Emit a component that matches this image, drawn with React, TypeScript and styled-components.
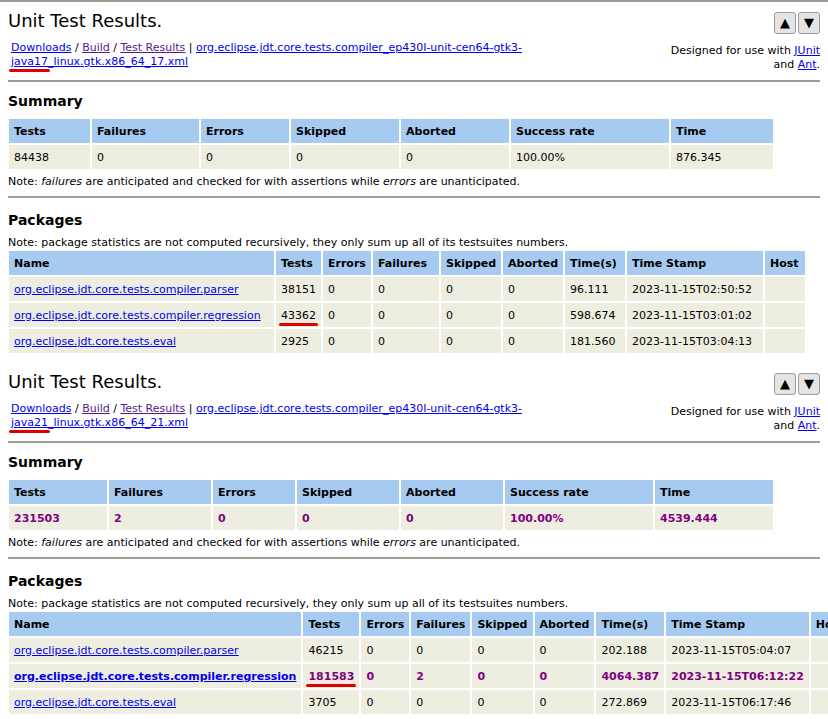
import React from "react";
import styled, { createGlobalStyle, css } from "styled-components";

const GlobalStyles = createGlobalStyle`
  html, body { margin: 0; background: #fff; overflow: hidden; }
  body {
    font-family: "DejaVu Sans", Verdana, sans-serif;
    font-size: 11px;
    color: #000;
    border-top: 2px solid #a09c94;
    padding: 0 8px;
  }
  a { color: #0000ee; }
`;

const Wrap = styled.div<{ $first?: boolean }>`
  margin-top: ${(p) => (p.$first ? 0 : 8)}px;
`;

const Header = styled.div`
  display: flex;
  justify-content: space-between;
  align-items: flex-start;
  padding-top: 8px;
`;

const Title = styled.h1`
  margin: 0 0 10px 0;
  font-size: 18px;
  font-weight: normal;
`;

const Crumbs = styled.div`
  line-height: 14px;
  padding-left: 3px;
`;

const Visited = styled.a`
  color: #551a8b;
`;

const RightBox = styled.div`
  display: flex;
  flex-direction: column;
  align-items: flex-end;
  text-align: right;
  line-height: 14px;
  gap: 10px;
  padding-top: 2px;
`;

const Arrows = styled.div`
  display: flex;
  gap: 2px;
`;

const ArrowBtn = styled.button`
  width: 22px;
  height: 22px;
  padding: 0;
  border: 1px solid #9a9a9a;
  border-radius: 3px;
  background: #e4e4e4;
  font-size: 13px;
  line-height: 20px;
  font-family: "DejaVu Sans", sans-serif;
`;

const Mark = styled.span`
  position: relative;
  &::after {
    content: "";
    position: absolute;
    left: -2px;
    right: -2px;
    bottom: -4px;
    height: 3px;
    border-radius: 2px;
    background: #e00000;
  }
`;

const Rule = styled.hr`
  border: 0;
  border-top: 2px solid #a09c94;
  margin: 8px 0 0 0;
`;

const H2 = styled.h2<{ $pk?: boolean }>`
  font-size: 14px;
  margin: ${(p) => (p.$pk ? "14px 0 8px 0" : "11px 0 8px 0")};
`;

const Table = styled.table`
  border-collapse: separate;
  border-spacing: 2px;
  table-layout: fixed;
  margin-left: -1px;
`;

const Th = styled.th`
  background: #a6caf0;
  text-align: left;
  padding: 0 5px;
  height: 24px;
  font-weight: bold;
  white-space: nowrap;
  overflow: hidden;
`;

const Td = styled.td<{ $hl?: boolean }>`
  background: #eeeee0;
  padding: 0 5px;
  height: 24px;
  white-space: nowrap;
  overflow: hidden;
  ${(p) =>
    p.$hl &&
    css`
      color: #800080;
      font-weight: bold;
    `}
`;

const Note = styled.p`
  margin: 4px 0 6px 0;
`;

type Pkg = { name: string; v: string[]; hl?: boolean; mark?: boolean };

type Section = {
  file: string;
  mark: string;
  summary: string[];
  hl: boolean;
  sumW: number[];
  pkgW: number[];
  pkgs: Pkg[];
};

const sumHead = ["Tests", "Failures", "Errors", "Skipped", "Aborted", "Success rate", "Time"];
const pkgHead = ["Name", "Tests", "Errors", "Failures", "Skipped", "Aborted", "Time(s)", "Time Stamp", "Host"];

const sections: Section[] = [
  {
    file: "_linux.gtk.x86_64_17.xml",
    mark: "java17",
    summary: ["84438", "0", "0", "0", "0", "100.00%", "876.345"],
    hl: false,
    sumW: [81, 107, 88, 108, 108, 158, 102],
    pkgW: [265, 45, 48, 66, 54, 58, 60, 136, 40],
    pkgs: [
      { name: "org.eclipse.jdt.core.tests.compiler.parser", v: ["38151", "0", "0", "0", "0", "96.111", "2023-11-15T02:50:52", ""] },
      { name: "org.eclipse.jdt.core.tests.compiler.regression", v: ["43362", "0", "0", "0", "0", "598.674", "2023-11-15T03:01:02", ""], mark: true },
      { name: "org.eclipse.jdt.core.tests.eval", v: ["2925", "0", "0", "0", "0", "181.560", "2023-11-15T03:04:13", ""] },
    ],
  },
  {
    file: "_linux.gtk.x86_64_21.xml",
    mark: "java21",
    summary: ["231503", "2", "0", "0", "0", "100.00%", "4539.444"],
    hl: true,
    sumW: [98, 102, 82, 102, 102, 148, 118],
    pkgW: [295, 55, 48, 60, 58, 68, 62, 148, 40],
    pkgs: [
      { name: "org.eclipse.jdt.core.tests.compiler.parser", v: ["46215", "0", "0", "0", "0", "202.188", "2023-11-15T05:04:07", ""] },
      { name: "org.eclipse.jdt.core.tests.compiler.regression", v: ["181583", "0", "2", "0", "0", "4064.387", "2023-11-15T06:12:22", ""], hl: true, mark: true },
      { name: "org.eclipse.jdt.core.tests.eval", v: ["3705", "0", "0", "0", "0", "272.869", "2023-11-15T06:17:46", ""] },
    ],
  },
];

function Report({ s, first }: { s: Section; first?: boolean }) {
  return (
    <Wrap $first={first}>
      <Header>
        <div>
          <Title>Unit Test Results.</Title>
          <Crumbs>
            <a href="#">Downloads</a> / <Visited href="#">Build</Visited> /{" "}
            <Visited href="#">Test Results</Visited> |{" "}
            <a href="#">org.eclipse.jdt.core.tests.compiler_ep430I-unit-cen64-gtk3-</a>
            <br />
            <a href="#">
              <Mark>{s.mark}</Mark>
              {s.file}
            </a>
          </Crumbs>
        </div>
        <RightBox>
          <Arrows>
            <ArrowBtn>▲</ArrowBtn>
            <ArrowBtn>▼</ArrowBtn>
          </Arrows>
          <div>
            Designed for use with <a href="#">JUnit</a>
            <br />
            and <a href="#">Ant</a>.
          </div>
        </RightBox>
      </Header>
      <Rule />
      <H2>Summary</H2>
      <Table>
        <colgroup>
          {s.sumW.map((w, i) => (
            <col key={i} style={{ width: w }} />
          ))}
        </colgroup>
        <thead>
          <tr>
            {sumHead.map((h) => (
              <Th key={h}>{h}</Th>
            ))}
          </tr>
        </thead>
        <tbody>
          <tr>
            {s.summary.map((v, i) => (
              <Td key={i} $hl={s.hl}>
                {v}
              </Td>
            ))}
          </tr>
        </tbody>
      </Table>
      <Note>
        Note: <i>failures</i> are anticipated and checked for with assertions while <i>errors</i> are
        unanticipated.
      </Note>
      <Rule />
      <H2 $pk>Packages</H2>
      <div>Note: package statistics are not computed recursively, they only sum up all of its testsuites numbers.</div>
      <Table>
        <colgroup>
          {s.pkgW.map((w, i) => (
            <col key={i} style={{ width: w }} />
          ))}
        </colgroup>
        <thead>
          <tr>
            {pkgHead.map((h) => (
              <Th key={h}>{h}</Th>
            ))}
          </tr>
        </thead>
        <tbody>
          {s.pkgs.map((p) => (
            <tr key={p.name}>
              <Td>
                <a href="#" style={p.hl ? { fontWeight: "bold" } : undefined}>
                  {p.name}
                </a>
              </Td>
              {p.v.map((v, i) => (
                <Td key={i} $hl={p.hl}>
                  {i === 0 && p.mark ? <Mark>{v}</Mark> : v}
                </Td>
              ))}
            </tr>
          ))}
        </tbody>
      </Table>
    </Wrap>
  );
}

export default function App() {
  return (
    <>
      <GlobalStyles />
      <Report s={sections[0]} first />
      <Report s={sections[1]} />
      <Rule style={{ marginTop: 4 }} />
    </>
  );
}
